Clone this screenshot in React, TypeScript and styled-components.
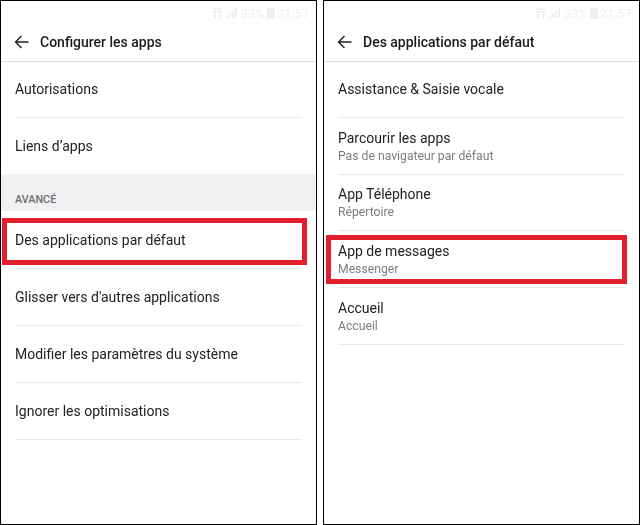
import styled, { createGlobalStyle, css } from 'styled-components';

const GlobalStyle = createGlobalStyle`
  html, body {
    margin: 0;
    padding: 0;
    background: #fff;
  }
`;

// the source is a soft jpeg, text is never crisp
const soft = css`
  filter: blur(0.3px);
`;

const Page = styled.div`
  display: flex;
  justify-content: space-between;
  width: 640px;
  height: 525px;
  overflow: hidden;
  background: #fff;
  font-family: Roboto, "Liberation Sans", sans-serif;
`;

const Phone = styled.section`
  box-sizing: border-box;
  width: 317px;
  height: 525px;
  border: 1px solid #000;
  display: flex;
  flex-direction: column;
  background: #fff;
`;

const StatusBar = styled.div`
  ${soft}
  box-sizing: border-box;
  height: 23px;
  padding: 1px 7px 0 0;
  display: flex;
  justify-content: flex-end;
  align-items: center;
  gap: 2px;
  color: #efefef;
  font-size: 13px;
`;

const Header = styled.header`
  box-sizing: border-box;
  height: 38px;
  padding: 0 0 1px 13px;
  display: flex;
  align-items: center;
  gap: 11px;
  border-bottom: 1px solid #dcdcdc;
`;

const Title = styled.h1`
  ${soft}
  margin: 0;
  font-size: 14px;
  font-weight: 500;
  color: #1a1a1a;
`;

const Row = styled.div<{ $height?: number }>`
  position: relative;
  box-sizing: border-box;
  height: ${p => p.$height ?? 57}px;
  padding: 0 14px;
  display: flex;
`;

const RowBody = styled.div<{ $plain?: boolean; $low?: boolean }>`
  flex: 1;
  display: flex;
  flex-direction: column;
  justify-content: center;
  padding-top: ${p => (p.$low ? 2 : 0)}px;
  border-bottom: 1px solid ${p => (p.$plain ? 'transparent' : '#e8e8e8')};
`;

const RowTitle = styled.div`
  ${soft}
  font-size: 14px;
  line-height: 19px;
  color: #222;
`;

const RowSub = styled.div`
  ${soft}
  font-size: 12.2px;
  line-height: 16px;
  color: #7d7d7d;
`;

const SectionLabel = styled.div`
  box-sizing: border-box;
  height: 37px;
  padding: 19px 14px 0;
  background: #f0f1f3;
  font-size: 10.8px;
  line-height: 14px;
  font-weight: 500;
  color: #6d6d6d;
`;

const Highlight = styled.div<{ $top: number; $bottom: number; $left: number; $right: number }>`
  position: absolute;
  top: ${p => p.$top}px;
  bottom: ${p => p.$bottom}px;
  left: ${p => p.$left}px;
  right: ${p => p.$right}px;
  border: 5px solid #e31e2d;
`;

const BackArrow = () => (
  <svg width="15" height="14" viewBox="0 0 15 14" fill="none" stroke="#222" strokeWidth="1.4">
    <path d="M14.5 7H1.5M7.5 1L1.5 7l6 6" />
  </svg>
);

const Status = () => (
  <StatusBar>
    <svg width="26" height="12" viewBox="0 0 26 12" fill="#efefef">
      <path d="M1 1h9v2H1zM1 4h9v2H1zM2 7h2v4H2zM7 7h2v4H7zM14 9h2v2h-2zM17 7h2v4h-2zM20 4h2v7h-2zM23 1h2v10h-2z" />
    </svg>
    <span>33%</span>
    <svg width="8" height="12" viewBox="0 0 8 12" fill="#efefef">
      <path d="M0 1h8v11H0z" />
    </svg>
    <span>21:57</span>
  </StatusBar>
);

export default function App() {
  return (
    <Page>
      <GlobalStyle />
      <Phone>
        <Status />
        <Header>
          <BackArrow />
          <Title>Configurer les apps</Title>
        </Header>
        <Row $height={56}><RowBody><RowTitle>Autorisations</RowTitle></RowBody></Row>
        <Row $height={56}><RowBody $plain $low><RowTitle>Liens d’apps</RowTitle></RowBody></Row>
        <SectionLabel>AVANCÉ</SectionLabel>
        <Row $height={58}>
          <RowBody $low><RowTitle>Des applications par défaut</RowTitle></RowBody>
          <Highlight $top={7} $bottom={4} $left={1} $right={9} />
        </Row>
        <Row><RowBody><RowTitle>Glisser vers d'autres applications</RowTitle></RowBody></Row>
        <Row><RowBody><RowTitle>Modifier les paramètres du système</RowTitle></RowBody></Row>
        <Row><RowBody><RowTitle>Ignorer les optimisations</RowTitle></RowBody></Row>
      </Phone>
      <Phone>
        <Status />
        <Header>
          <BackArrow />
          <Title>Des applications par défaut</Title>
        </Header>
        <Row $height={56}><RowBody><RowTitle>Assistance &amp; Saisie vocale</RowTitle></RowBody></Row>
        <Row><RowBody><RowTitle>Parcourir les apps</RowTitle><RowSub>Pas de navigateur par défaut</RowSub></RowBody></Row>
        <Row $height={56}><RowBody><RowTitle>App Téléphone</RowTitle><RowSub>Répertoire</RowSub></RowBody></Row>
        <Row>
          <RowBody><RowTitle>App de messages</RowTitle><RowSub>Messenger</RowSub></RowBody>
          <Highlight $top={4} $bottom={4} $left={2} $right={12} />
        </Row>
        <Row><RowBody><RowTitle>Accueil</RowTitle><RowSub>Accueil</RowSub></RowBody></Row>
      </Phone>
    </Page>
  );
}
